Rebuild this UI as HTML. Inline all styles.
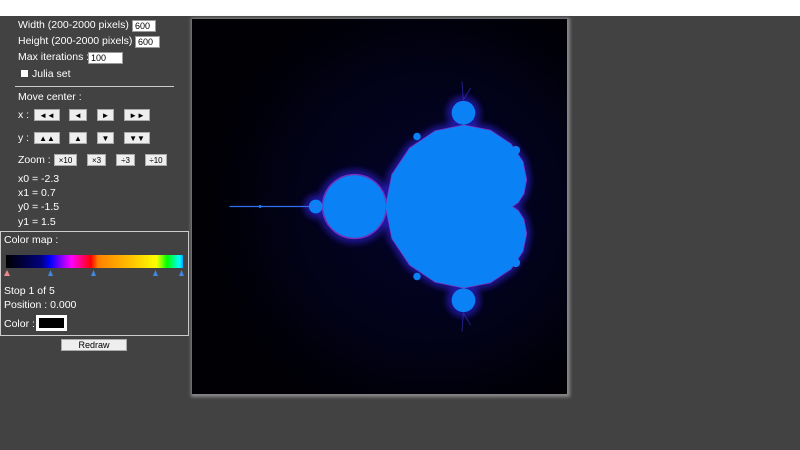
<!DOCTYPE html>
<html><head><meta charset="utf-8"><style>
body{margin:0;width:800px;height:450px;background:#424242;font-family:"Liberation Sans",sans-serif;color:#fff;font-size:10.5px;position:relative;overflow:hidden}
.t{position:absolute;white-space:nowrap;line-height:13px}
.inp{position:absolute;background:#fff;color:#000;font-size:9px;line-height:11px;height:12px;padding-left:2px;box-sizing:border-box;border:1px solid #999}
.b{position:absolute;background:#eee;color:#000;font-size:8px;height:12px;line-height:11px;text-align:center;border:1px solid #aaa;box-sizing:border-box}
</style></head><body>
<div style="position:absolute;left:0;top:0;width:800px;height:16px;background:#fff"></div>
<div class="t" style="left:18px;top:19px">Width (200-2000 pixels) :</div>
<div class="inp" style="left:132px;top:20px;width:24px">600</div>
<div class="t" style="left:18px;top:35px">Height (200-2000 pixels) :</div>
<div class="inp" style="left:135px;top:36px;width:25px">600</div>
<div class="t" style="left:18px;top:51px">Max iterations :</div>
<div class="inp" style="left:88px;top:52px;width:35px">100</div>
<div style="position:absolute;left:21px;top:70px;width:7px;height:7px;background:#fff"></div>
<div class="t" style="left:32px;top:68px">Julia set</div>
<div style="position:absolute;left:15px;top:86px;width:159px;height:1px;background:#ccc"></div>
<div class="t" style="left:18px;top:91px">Move center :</div>
<div class="t" style="left:18px;top:109px">x :</div>
<div class="b" style="left:34px;top:109px;width:26px">◄◄</div>
<div class="b" style="left:69px;top:109px;width:18px">◄</div>
<div class="b" style="left:97px;top:109px;width:17px">►</div>
<div class="b" style="left:124px;top:109px;width:26px">►►</div>
<div class="t" style="left:18px;top:132px">y :</div>
<div class="b" style="left:34px;top:132px;width:26px">▲▲</div>
<div class="b" style="left:69px;top:132px;width:18px">▲</div>
<div class="b" style="left:97px;top:132px;width:17px">▼</div>
<div class="b" style="left:124px;top:132px;width:26px">▼▼</div>
<div class="t" style="left:18px;top:154px">Zoom :</div>
<div class="b" style="left:54px;top:154px;width:23px">×10</div>
<div class="b" style="left:87px;top:154px;width:19px">×3</div>
<div class="b" style="left:116px;top:154px;width:19px">÷3</div>
<div class="b" style="left:145px;top:154px;width:22px">÷10</div>
<div class="t" style="left:18px;top:173px">x0 = -2.3</div>
<div class="t" style="left:18px;top:187px">x1 = 0.7</div>
<div class="t" style="left:18px;top:201px">y0 = -1.5</div>
<div class="t" style="left:18px;top:216px">y1 = 1.5</div>
<div style="position:absolute;left:0;top:231px;width:187px;height:103px;border:1px solid #ccc"></div>
<div class="t" style="left:4px;top:234px">Color map :</div>
<div style="position:absolute;left:6px;top:255px;width:177px;height:13px;background:linear-gradient(90deg,#000 0%,#000080 20%,#0000ff 25%,#ff00ff 37%,#ff0000 48%,#ff8000 52%,#ffc000 70%,#ffff00 85%,#00ff00 91%,#00ffff 98%,#00a0ff 100%)"></div>
<svg style="position:absolute;left:0;top:268px" width="190" height="10">
<polygon points="4,8 10,8 7,2" fill="#e88"/>
<polygon points="48,8 53,8 50.5,2" fill="#48d"/>
<polygon points="91,8 96,8 93.5,2" fill="#48d"/>
<polygon points="153,8 158,8 155.5,2" fill="#48d"/>
<polygon points="179,8 184,8 181.5,2" fill="#48d"/>
</svg>
<div class="t" style="left:4px;top:285px">Stop 1 of 5</div>
<div class="t" style="left:4px;top:299px">Position : 0.000</div>
<div class="t" style="left:4px;top:318px">Color :</div>
<div style="position:absolute;left:36px;top:315px;width:31px;height:16px;background:#fff;box-sizing:border-box;padding:3px"><div style="background:#000;width:100%;height:100%"></div></div>
<div class="b" style="left:61px;top:339px;width:66px;font-size:9px">Redraw</div>
<div style="position:absolute;left:192px;top:19px;width:375px;height:375px;box-shadow:1px 1px 3px 2px #888;overflow:hidden">
<svg width="375" height="375" viewBox="192 19 375 375">
<defs>
<radialGradient id="g" cx="430" cy="207" r="220" gradientUnits="userSpaceOnUse">
<stop offset="0" stop-color="#04042a"/><stop offset=".6" stop-color="#020218"/><stop offset="1" stop-color="#000005"/></radialGradient>
<filter id="bl" x="-50%" y="-50%" width="200%" height="200%"><feGaussianBlur stdDeviation=".03"/></filter>
</defs>
<rect x="192" y="19" width="375" height="375" fill="url(#g)"/>
<g transform="translate(479.5,206.5) scale(125,-125)">
<g filter="url(#bl)" fill="none" stroke="#3020e0" stroke-width="0.05" opacity=".85">
<path d="M.25,0 L.2665,.0045 .308,.0335 .3535,.1035 .375,.2165 .346,.358 .25,.5 .087,.608 -.125,.6495 -.3535,.6035 -.558,.4665 -.6995,.2545 -.75,0 -.6995,-.2545 -.558,-.4665 -.3535,-.6035 -.125,-.6495 .087,-.608 .25,-.5 .346,-.358 .375,-.2165 .3535,-.1035 .308,-.0335 .2665,-.0045Z"/>
<circle cx="-1" cy="0" r=".26"/><circle cx="-.128" cy=".75" r=".1"/><circle cx="-.128" cy="-.75" r=".1"/><circle cx="-1.31" cy="0" r=".06"/>
</g>
<g fill="none" stroke="#a040d0" stroke-width="0.012" opacity=".7">
<path d="M.25,0 L.2665,.0045 .308,.0335 .3535,.1035 .375,.2165 .346,.358 .25,.5 .087,.608 -.125,.6495 -.3535,.6035 -.558,.4665 -.6995,.2545 -.75,0 -.6995,-.2545 -.558,-.4665 -.3535,-.6035 -.125,-.6495 .087,-.608 .25,-.5 .346,-.358 .375,-.2165 .3535,-.1035 .308,-.0335 .2665,-.0045Z"/>
<circle cx="-1" cy="0" r=".255"/>
</g>
<g fill="#0a82f5">
<path d="M.25,0 L.2665,.0045 .308,.0335 .3535,.1035 .375,.2165 .346,.358 .25,.5 .087,.608 -.125,.6495 -.3535,.6035 -.558,.4665 -.6995,.2545 -.75,0 -.6995,-.2545 -.558,-.4665 -.3535,-.6035 -.125,-.6495 .087,-.608 .25,-.5 .346,-.358 .375,-.2165 .3535,-.1035 .308,-.0335 .2665,-.0045Z"/>
<circle cx="-1" cy="0" r=".25"/>
<circle cx="-.128" cy=".75" r=".095"/><circle cx="-.128" cy="-.75" r=".095"/>
<circle cx="-1.31" cy="0" r=".055"/>
<circle cx="-1.755" cy="0" r=".012"/>
<circle cx=".29" cy=".45" r=".035"/><circle cx=".29" cy="-.45" r=".035"/>
<circle cx="-.5" cy=".56" r=".03"/><circle cx="-.5" cy="-.56" r=".03"/>
</g>
<line x1="-2" y1="0" x2="-1.3" y2="0" stroke="#3070f0" stroke-width=".01"/>
<g stroke="#3a30d0" stroke-width=".008" fill="none" opacity=".6">
<path d="M-.13,.85 L-.14,1.0 M-.13,.85 L-.07,.95 M-.13,-.85 L-.14,-1.0 M-.13,-.85 L-.07,-.95"/>
</g>
</g>
</svg>
</div>
</body></html>
